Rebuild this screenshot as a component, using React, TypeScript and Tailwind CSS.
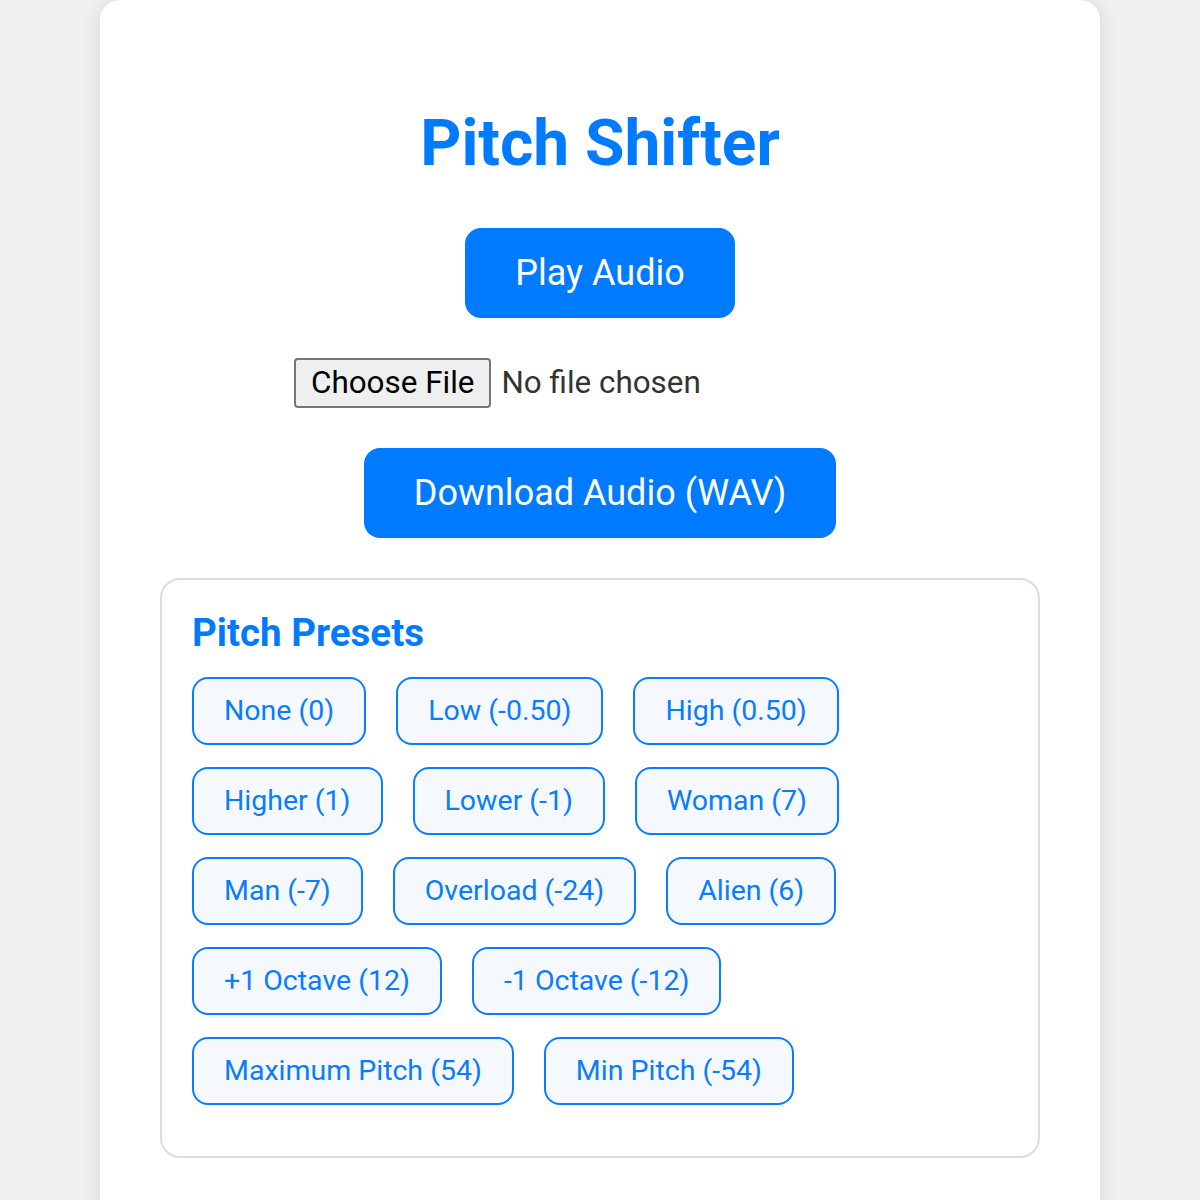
const presets = [
  "None (0)",
  "Low (-0.50)",
  "High (0.50)",
  "Higher (1)",
  "Lower (-1)",
  "Woman (7)",
  "Man (-7)",
  "Overload (-24)",
  "Alien (6)",
  "+1 Octave (12)",
  "-1 Octave (-12)",
  "Maximum Pitch (54)",
  "Min Pitch (-54)",
];

const App = () => {
  return (
    <div className="min-h-[1200px] w-full bg-[#f0f0f0] font-['Roboto',sans-serif]">
      <div className="mx-auto w-[1000px] rounded-[20px] bg-white px-[60px] pt-[105px] pb-[60px] shadow-[0_0_20px_rgba(0,0,0,0.1)]">
        <h1 className="mb-[46px] text-center text-[64px] leading-[77px] font-bold text-[#007bff]">
          Pitch Shifter
        </h1>

        <div className="flex flex-col items-center gap-[40px]">
          <button className="flex h-[90px] items-center justify-center rounded-[16px] bg-[#007bff] px-[50px] text-[36px] text-white">
            Play Audio
          </button>

          <div className="flex w-[612px] items-center">
            <span className="flex h-[50px] items-center rounded-[4px] border-2 border-[#767676] bg-[#efefef] px-[15px] text-[31.4px] text-black">
              Choose File
            </span>
            <span className="ml-[10px] text-[31.4px] text-[#333]">No file chosen</span>
          </div>

          <button className="flex h-[90px] items-center justify-center rounded-[16px] bg-[#007bff] px-[50px] text-[36px] text-white">
            Download Audio (WAV)
          </button>
        </div>

        <div className="mt-[40px] rounded-[20px] border-2 border-[#dddddd] px-[30px] pt-[30px] pb-[51px]">
          <h3 className="mb-[21px] text-[38.5px] leading-[46px] font-bold text-[#007bff]">Pitch Presets</h3>
          <div className="flex flex-wrap gap-x-[30px] gap-y-[22px]">
            {presets.map((p) => (
              <button
                key={p}
                className="flex h-[68px] items-center rounded-[16px] border-2 border-[#0a7cff] bg-[#f5f8fc] px-[30px] text-[28.5px] text-[#0a7cff]"
              >
                {p}
              </button>
            ))}
          </div>
        </div>
      </div>
    </div>
  );
};

export default App;
